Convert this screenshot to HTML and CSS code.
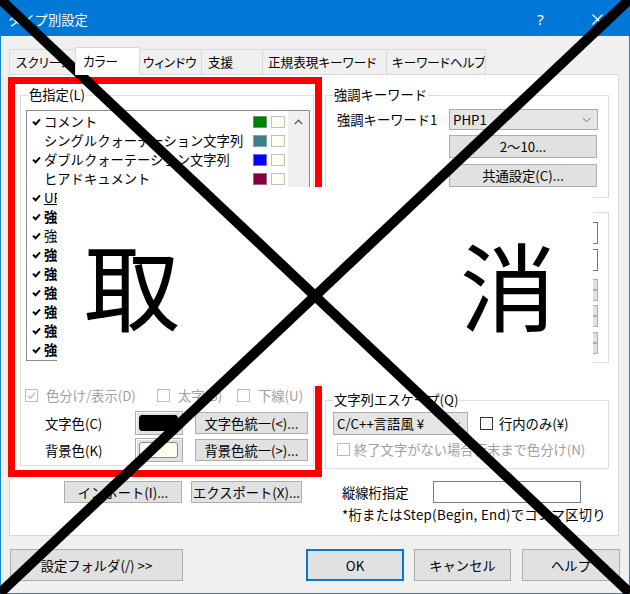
FILE: index.html
```html
<!DOCTYPE html>
<html lang="ja">
<head>
<meta charset="utf-8">
<title>タイプ別設定</title>
<link rel="stylesheet" href="styles.css">
</head>
<body>
<div class="window">
  <div class="titlebar">
    <span class="title">タイプ別設定</span>
    <span class="tb-help">?</span>
    <span class="tb-close"><svg width="11" height="11" viewBox="0 0 11 11"><path d="M0.5 0.5L10.5 10.5M10.5 0.5L0.5 10.5" stroke="#fff" stroke-width="1.1" fill="none"/></svg></span>
  </div>

  <div class="tabs">
    <div class="tab t1">スクリーン</div>
    <div class="tab t2 sel">カラー</div>
    <div class="tab t3">ウィンドウ</div>
    <div class="tab t4">支援</div>
    <div class="tab t5">正規表現キーワード</div>
    <div class="tab t6">キーワードヘルプ</div>
  </div>

  <div class="page">
    <div class="col-left">
      <div class="group g-colors">
        <span class="legend">色指定(L)</span>
        <div class="listbox">
          <div class="rows">
            <div class="row"><span class="chk"><svg width="9" height="8" viewBox="0 0 9 8"><path d="M1 3.6L3.6 6.2L8 1.4" fill="none" stroke="#000" stroke-width="2"/></svg></span><span class="name">コメント</span><span class="sw c-green"></span><span class="sw c-cream"></span></div>
            <div class="row"><span class="chk"></span><span class="name">シングルクォーテーション文字列</span><span class="sw c-teal"></span><span class="sw c-cream"></span></div>
            <div class="row"><span class="chk"><svg width="9" height="8" viewBox="0 0 9 8"><path d="M1 3.6L3.6 6.2L8 1.4" fill="none" stroke="#000" stroke-width="2"/></svg></span><span class="name">ダブルクォーテーション文字列</span><span class="sw c-blue"></span><span class="sw c-cream"></span></div>
            <div class="row"><span class="chk"></span><span class="name">ヒアドキュメント</span><span class="sw c-maroon"></span><span class="sw c-cream"></span></div>
            <div class="row"><span class="chk"><svg width="9" height="8" viewBox="0 0 9 8"><path d="M1 3.6L3.6 6.2L8 1.4" fill="none" stroke="#000" stroke-width="2"/></svg></span><span class="name u">URL</span><span class="sw c-blue"></span><span class="sw c-cream"></span></div>
            <div class="row"><span class="chk"><svg width="9" height="8" viewBox="0 0 9 8"><path d="M1 3.6L3.6 6.2L8 1.4" fill="none" stroke="#000" stroke-width="2"/></svg></span><span class="name b">強調キーワード1</span><span class="sw c-navy"></span><span class="sw c-cream"></span></div>
            <div class="row"><span class="chk"><svg width="9" height="8" viewBox="0 0 9 8"><path d="M1 3.6L3.6 6.2L8 1.4" fill="none" stroke="#000" stroke-width="2"/></svg></span><span class="name">強調キーワード2</span><span class="sw c-navy"></span><span class="sw c-cream"></span></div>
            <div class="row"><span class="chk"><svg width="9" height="8" viewBox="0 0 9 8"><path d="M1 3.6L3.6 6.2L8 1.4" fill="none" stroke="#000" stroke-width="2"/></svg></span><span class="name b">強調キーワード3</span><span class="sw c-navy"></span><span class="sw c-cream"></span></div>
            <div class="row"><span class="chk"><svg width="9" height="8" viewBox="0 0 9 8"><path d="M1 3.6L3.6 6.2L8 1.4" fill="none" stroke="#000" stroke-width="2"/></svg></span><span class="name b">強調キーワード4</span><span class="sw c-navy"></span><span class="sw c-cream"></span></div>
            <div class="row"><span class="chk"><svg width="9" height="8" viewBox="0 0 9 8"><path d="M1 3.6L3.6 6.2L8 1.4" fill="none" stroke="#000" stroke-width="2"/></svg></span><span class="name b">強調キーワード5</span><span class="sw c-navy"></span><span class="sw c-cream"></span></div>
            <div class="row"><span class="chk"><svg width="9" height="8" viewBox="0 0 9 8"><path d="M1 3.6L3.6 6.2L8 1.4" fill="none" stroke="#000" stroke-width="2"/></svg></span><span class="name b">強調キーワード6</span><span class="sw c-navy"></span><span class="sw c-cream"></span></div>
            <div class="row"><span class="chk"><svg width="9" height="8" viewBox="0 0 9 8"><path d="M1 3.6L3.6 6.2L8 1.4" fill="none" stroke="#000" stroke-width="2"/></svg></span><span class="name b">強調キーワード7</span><span class="sw c-navy"></span><span class="sw c-cream"></span></div>
            <div class="row"><span class="chk"><svg width="9" height="8" viewBox="0 0 9 8"><path d="M1 3.6L3.6 6.2L8 1.4" fill="none" stroke="#000" stroke-width="2"/></svg></span><span class="name b">強調キーワード8</span><span class="sw c-navy"></span><span class="sw c-cream"></span></div>
          </div>
          <div class="vscroll">
            <span class="sb-arrow"><svg width="9" height="6" viewBox="0 0 9 6"><path d="M0.8 5L4.5 1.3L8.2 5" fill="none" stroke="#606060" stroke-width="1.4"/></svg></span>
          </div>
        </div>

        <div class="attrs">
          <span class="cbi cbi1"><span class="cb dis"><svg width="11" height="11" viewBox="0 0 11 11"><path d="M2 5.6L4.4 8L9 2.8" fill="none" stroke="#bcbcbc" stroke-width="1.2"/></svg></span>色分け/表示(D)</span>
          <span class="cbi cbi2"><span class="cb dis"></span>太字(B)</span>
          <span class="cbi cbi3"><span class="cb dis"></span>下線(U)</span>
        </div>

        <div class="color-grid">
          <span class="clabel">文字色(C)</span>
          <span class="cbtn"><span class="swatch s-black"></span></span>
          <span class="btn ubtn">文字色統一(&lt;)...</span>
          <span class="clabel">背景色(K)</span>
          <span class="cbtn"><span class="swatch s-cream"></span></span>
          <span class="btn ubtn">背景色統一(&gt;)...</span>
        </div>
      </div>

      <div class="io-row">
        <span class="btn io1">インポート(I)...</span>
        <span class="btn io2">エクスポート(X)...</span>
      </div>
    </div>

    <div class="col-right">
      <div class="group g-kw">
        <span class="legend">強調キーワード</span>
        <div class="kw-row">
          <span class="kw-label">強調キーワード1</span>
          <span class="combo kw-combo"><span class="combo-text">PHP1</span><svg width="9" height="6" viewBox="0 0 9 6"><path d="M0.8 1L4.5 4.7L8.2 1" fill="none" stroke="#707070" stroke-width="1"/></svg></span>
        </div>
        <span class="btn kw-btn first">2〜10...</span>
        <span class="btn kw-btn">共通設定(C)...</span>
      </div>

      <div class="group g-hidden">
        <span class="tbox"></span>
        <span class="tbox second"></span>
        <span class="spin first"><span></span><span></span></span>
        <span class="spin"><span></span><span></span></span>
        <span class="spin last"><span></span><span></span></span>
      </div>

      <div class="group g-esc">
        <span class="legend">文字列エスケープ(Q)</span>
        <div class="esc-row">
          <span class="combo esc-combo"><span class="combo-text">C/C++言語風 ¥</span><svg width="9" height="6" viewBox="0 0 9 6"><path d="M0.8 1L4.5 4.7L8.2 1" fill="none" stroke="#707070" stroke-width="1"/></svg></span>
          <span class="cb en"></span>
          <span class="esc-label">行内のみ(¥)</span>
        </div>
        <div class="esc-row2">
          <span class="cb dis"></span>
          <span class="dis-text">終了文字がない場合行末まで色分け(N)</span>
        </div>
      </div>

      <div class="vline-row">
        <span class="vline-label">縦線桁指定</span>
        <span class="tbox vline-input"></span>
      </div>
      <div class="note">*桁またはStep(Begin, End)でコンマ区切り</div>
    </div>
  </div>

  <div class="footer">
    <span class="btn fbtn fb-folder">設定フォルダ(/) &gt;&gt;</span>
    <span class="btn fbtn fb-ok">OK</span>
    <span class="btn fbtn fb-cancel">キャンセル</span>
    <span class="btn fbtn fb-help">ヘルプ</span>
  </div>

  <div class="redmark"></div>
  <div class="cover"><span class="big">取</span><span class="big">消</span></div>
  <svg class="cross" width="630" height="594" viewBox="0 0 630 594">
    <line x1="0" y1="-1" x2="630" y2="593" stroke="#000" stroke-width="10"/>
    <line x1="630" y1="-1" x2="0" y2="593" stroke="#000" stroke-width="10"/>
  </svg>
</div>
</body>
</html>
```

FILE: styles.css
```css
* { box-sizing: border-box; }
html, body { margin: 0; padding: 0; }
body {
  width: 630px;
  height: 594px;
  overflow: hidden;
  background: #f0f0f0;
  font-family: "Noto Sans CJK JP", "Noto Sans", sans-serif;
  font-size: 13.3px;
  color: #000;
}
.window {
  position: relative;
  width: 630px;
  height: 594px;
  background: #f0f0f0;
  box-shadow: inset 1px 0 #1883d7, inset -1px 0 #1883d7, inset 0 -1px #1883d7;
  overflow: hidden;
}

/* title bar */
.titlebar {
  height: 36px;
  background: #0078d7;
  display: flex;
  align-items: center;
  color: #fff;
  padding: 2px 4px 0 8px;
}
.title { flex: 1; font-size: 13.3px; }
.tb-help { width: 57px; text-align: center; font-family: "Noto Sans", sans-serif; font-size: 15px; }
.tb-close { width: 57px; display: flex; justify-content: center; align-items: center; }

/* tabs */
.tabs {
  display: flex;
  align-items: flex-end;
  height: 27px;
  margin-top: 11px;
  padding-left: 9px;
}
.tab {
  height: 25px;
  border: 1px solid #d9d9d9;
  border-bottom: 0;
  margin-left: -1px;
  padding-left: 6px;
  line-height: 23px;
  white-space: nowrap;
  overflow: hidden;
  background: #f0f0f0;
  font-size: 12.6px;
  font-feature-settings: "palt";
}
.t1 { margin-left: 0; width: 69px; }
.t2 { width: 65px; }
.t3 { width: 65px; padding-left: 5px; }
.t4 { width: 62px; }
.t5 { width: 125px; padding-left: 5px; }
.t6 { width: 100px; padding-left: 5px; }
.tab.sel {
  position: relative;
  z-index: 1;
  height: 28px;
  margin-left: -3px;
  margin-right: -2px;
  margin-bottom: -1px;
  background: #fff;
  padding-left: 7px;
  line-height: 25px;
}

/* page */
.page {
  display: flex;
  margin-left: 9px;
  width: 610px;
  height: 462px;
  background: #fff;
  border: 1px solid #d9d9d9;
  padding-left: 10px;
}
.col-left { width: 294px; }
.col-right { width: 284px; margin-left: 11px; }

.group { border: 1px solid #dcdcdc; }
.legend {
  display: block;
  width: max-content;
  margin: -10px 0 0 7px;
  padding: 0 1px;
  height: 18px;
  line-height: 18px;
  background: #fff;
}

/* colour group */
.g-colors { margin-top: 20px; height: 371px; }
.listbox {
  display: flex;
  margin: 6px 0 0 5px;
  width: 284px;
  height: 251px;
  border: 1px solid #8c8c8c;
  overflow: hidden;
}
.rows { flex: 1; padding-top: 1px; min-width: 0; }
.row {
  display: flex;
  align-items: center;
  height: 19px;
  white-space: nowrap;
}
.chk { width: 17px; display: flex; align-items: center; padding-left: 5px; }
.name { flex: 1; overflow: hidden; }
.name.b { font-weight: bold; }
.name.u { text-decoration: underline; }
.sw {
  width: 14px;
  height: 12px;
  margin-left: 4px;
  border: 1px solid #a0a0a0;
}
.sw:last-child { margin-right: 3px; }
.c-green { background: #008000; border-color: #6a9a6a; }
.c-teal { background: #408080; border-color: #7fa6a6; }
.c-blue { background: #0000ff; border-color: #6a6aff; }
.c-maroon { background: #800040; border-color: #a06a86; }
.c-navy { background: #000080; }
.c-cream { background: #fffff0; border-color: #c0c0c0; }
.vscroll { width: 21px; background: #f0f0f0; }
.sb-arrow { display: flex; height: 21px; align-items: center; justify-content: center; }

.attrs {
  display: flex;
  align-items: center;
  height: 16px;
  margin: 26px 0 0 4px;
  color: #a0a0a0;
  white-space: nowrap;
}
.cbi { display: flex; align-items: center; }
.cbi1 { width: 132px; }
.cbi2 { width: 80px; }
.cb {
  display: inline-flex;
  align-items: center;
  justify-content: center;
  width: 13px;
  height: 13px;
  margin-right: 8px;
  background: #fff;
  border: 1px solid #333;
  flex: none;
}
.cb.dis { border-color: #bcbcbc; }

.color-grid {
  display: grid;
  grid-template-columns: 97px 48px 113px;
  grid-auto-rows: 24px;
  column-gap: 12px;
  row-gap: 3px;
  align-items: center;
  margin: 8px 0 0 5px;
}
.clabel { padding-left: 19px; white-space: nowrap; }
.cbtn {
  display: flex;
  height: 24px;
  padding: 3px 4px 3px 3px;
  background: #e1e1e1;
  border: 1px solid #adadad;
  box-shadow: inset 1px 1px #fff;
}
.swatch { flex: 1; border-radius: 3px; }
.s-black { background: #000; border: 1px solid #000; }
.s-cream { background: #fffff0; border: 1px solid #8a8a8a; }

.btn {
  display: flex;
  align-items: center;
  justify-content: center;
  background: #e1e1e1;
  border: 1px solid #adadad;
  white-space: nowrap;
}
.ubtn { height: 22px; }

.io-row { display: flex; gap: 9px; margin: 15px 0 0 44px; }
.io-row .btn { height: 22px; }
.io1 { width: 118px; }
.io2 { width: 111px; }

/* keyword group */
.g-kw { margin-top: 20px; height: 103px; }
.kw-row {
  display: flex;
  align-items: center;
  height: 21px;
  margin-top: 5px;
  padding-left: 11px;
}
.kw-label { flex: 1; white-space: nowrap; }
.combo {
  display: flex;
  align-items: center;
  background: #e5e5e5;
  border: 1px solid #acacac;
  padding: 0 6px 0 3px;
  white-space: nowrap;
}
.combo-text { flex: 1; }
.kw-combo { width: 149px; height: 21px; margin-right: 10px; }
.kw-btn { width: 148px; height: 23px; margin: 6px 0 0 123px; }
.kw-btn.first { margin-top: 5px; }

/* hidden group (under cover) */
.g-hidden {
  margin-top: 14px;
  height: 151px;
  display: flex;
  flex-direction: column;
  align-items: flex-end;
  padding: 9px 10px 0 0;
}
.tbox {
  display: block;
  width: 149px;
  height: 22px;
  background: #fff;
  border: 1px solid #7a7a7a;
}
.tbox.second { margin-top: 5px; }
.spin {
  display: flex;
  flex-direction: column;
  width: 18px;
  height: 22px;
  margin-top: 4px;
}
.spin.first { margin-top: 8px; }
.spin.last { margin-top: 5px; }
.spin span { flex: 1; background: #e1e1e1; border: 1px solid #adadad; }

/* escape group */
.g-esc { margin-top: 37px; height: 69px; }
.esc-row { display: flex; align-items: center; height: 23px; margin-top: 3px; }
.esc-combo { width: 135px; height: 23px; margin-left: 7px; }
.esc-row .cb { margin: 0 6px 0 12px; }
.esc-label { white-space: nowrap; }
.esc-row2 {
  display: flex;
  align-items: center;
  height: 17px;
  margin-top: 6px;
  overflow: hidden;
  white-space: nowrap;
}
.esc-row2 .cb { margin: 0 4px 0 11px; }
.dis-text { color: #a0a0a0; }

.vline-row { display: flex; align-items: center; height: 22px; margin: 12px 0 0 17px; }
.vline-label { width: 91px; white-space: nowrap; }
.vline-input { width: 148px; }
.note { margin: 4px 0 0 17px; line-height: 16px; white-space: nowrap; letter-spacing: 0.3px; }

/* footer */
.footer {
  display: flex;
  height: 32px;
  margin-top: 13px;
  padding: 0 10px;
}
.fbtn { height: 32px; }
.fb-folder { width: 173px; }
.fb-ok { width: 98px; margin-left: auto; border: 2px solid #0078d7; }
.fb-cancel { width: 97px; margin-left: 10px; }
.fb-help { width: 98px; margin-left: 11px; }

/* overlays */
.redmark {
  position: absolute;
  left: 8px;
  top: 77px;
  width: 314px;
  height: 400px;
  border: 7px solid #ff0000;
}
.cover {
  position: absolute;
  left: 57px;
  top: 187px;
  width: 536px;
  height: 199px;
  background: #fff;
  display: flex;
  align-items: center;
  justify-content: space-between;
  padding: 0 37px 8px 27px;
}
.big { font-size: 96px; line-height: 1; }
.cross { position: absolute; left: 0; top: 0; }
```
